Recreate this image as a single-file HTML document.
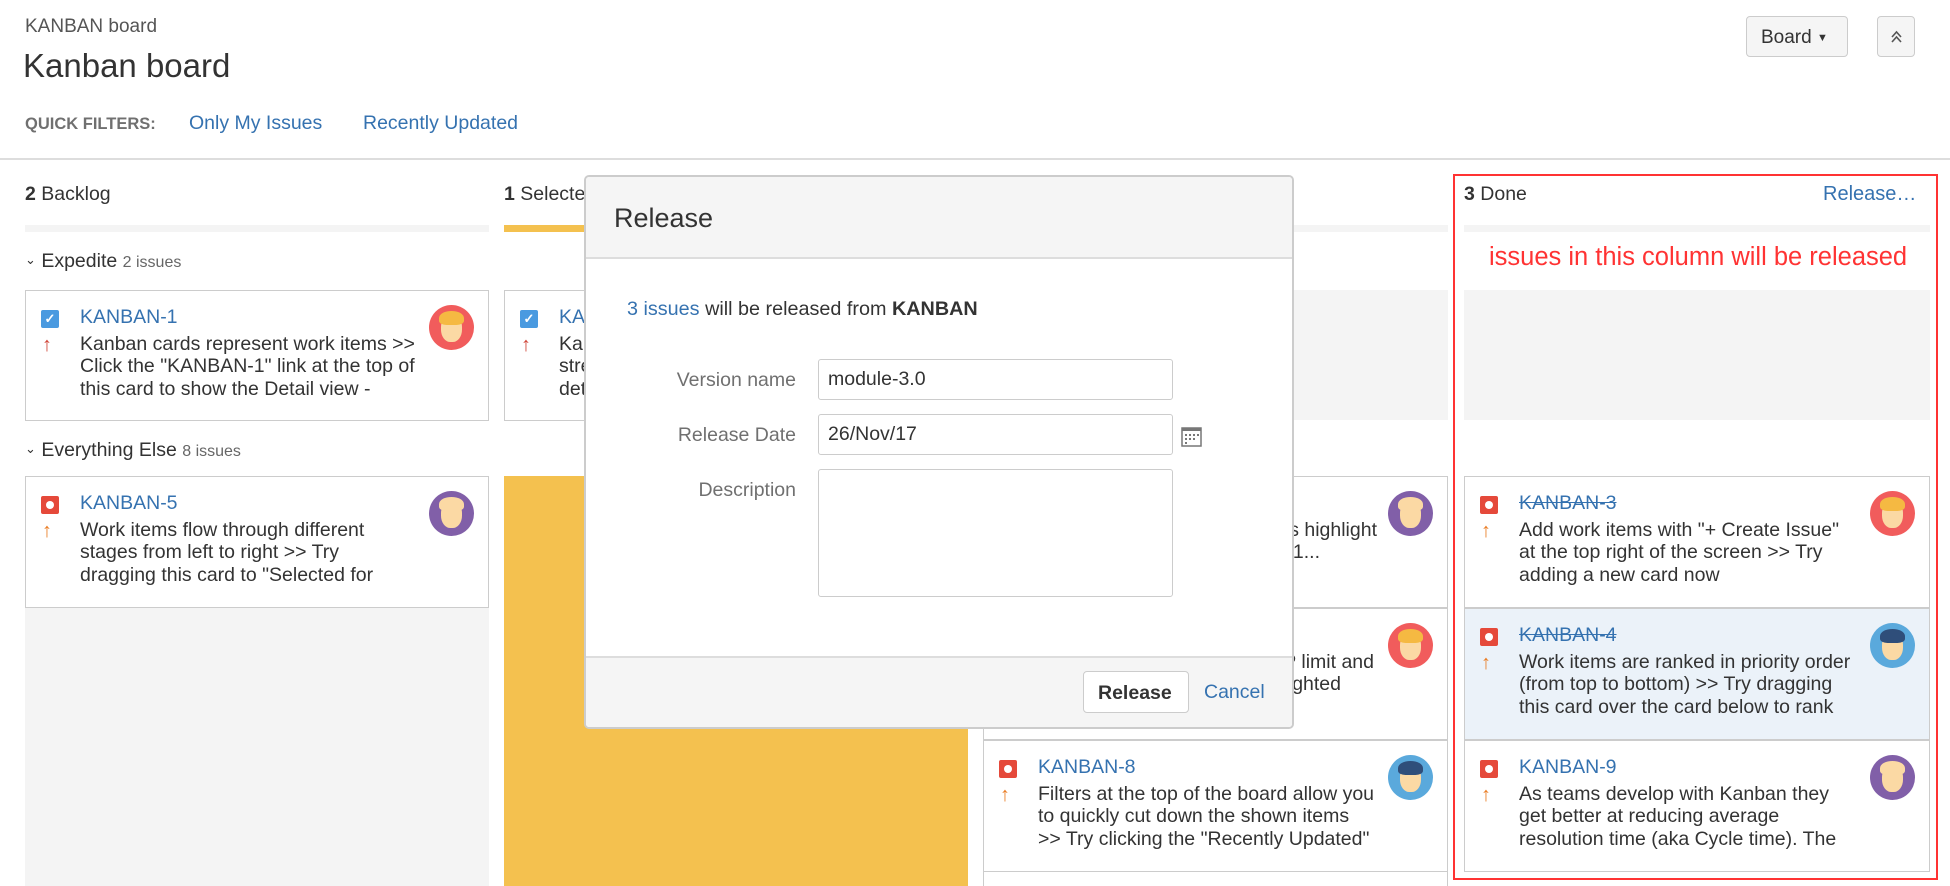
<!DOCTYPE html>
<html><head><meta charset="utf-8"><style>
*{margin:0;padding:0;box-sizing:border-box}
html,body{width:1950px;height:886px;overflow:hidden}
body{background:#fff;font-family:"Liberation Sans",Arial,sans-serif;color:#333;position:relative}
.a{position:absolute}
.link{color:#3572b0}
.btn{position:absolute;border:1px solid #ccc;border-radius:4px;background:#f5f5f5;font-size:19px;color:#333}
.colh{font-size:19.5px;color:#333;top:183px}
.bar{height:7px;background:#f4f4f4;top:225px}
.card{position:absolute;background:#fff;border:1px solid #ccc;height:132px;overflow:hidden}
.key{position:absolute;left:54px;top:15px;font-size:19.5px;color:#3572b0}
.txt{position:absolute;left:54px;top:42px;font-size:19.5px;line-height:22.4px;color:#333;white-space:nowrap}
.rt{position:absolute;font-size:19.5px;line-height:22.4px;color:#333;white-space:nowrap;text-align:right}
.ic{position:absolute;left:15px;top:19px;width:18px;height:18px;border-radius:2px}
.bug{background:#e5493a}.bug::after{content:"";position:absolute;left:5px;top:5px;width:8px;height:8px;border-radius:50%;background:#fff}
.task{background:#4a9ae0;color:#fff;font-size:13px;text-align:center;line-height:18px;font-weight:bold}
.arr{position:absolute;left:16px;top:43px;font-size:20px;font-weight:bold}
.av{position:absolute;right:14px;top:14px;width:45px;height:45px;border-radius:50%;overflow:hidden}
.av::after{content:"";position:absolute;left:12px;top:10px;width:21px;height:27px;border-radius:45%;background:#fbd9a4}
.av::before{content:"";position:absolute;left:10px;top:6px;width:25px;height:14px;border-radius:50% 50% 30% 30%;background:var(--h,#f5b942);z-index:1}
.lbl{position:absolute;font-size:19.5px;color:#707070;text-align:right;width:240px;left:556px}
.inp{position:absolute;left:818px;width:355px;border:1px solid #ccc;border-radius:3px;background:#fff;font-size:19.5px;padding:8px 9px;color:#333}
</style></head><body>
<div class="a" style="left:25px;top:16px;font-size:19px;color:#555">KANBAN board</div>
<div class="a" style="left:23px;top:47px;font-size:33px;color:#333">Kanban board</div>
<div class="a" style="left:25px;top:115px;font-size:16.5px;font-weight:bold;color:#707070">QUICK FILTERS:</div>
<div class="a link" style="left:189px;top:112px;font-size:19.5px">Only My Issues</div>
<div class="a link" style="left:363px;top:112px;font-size:19.5px">Recently Updated</div>
<div class="btn" style="left:1746px;top:16px;width:102px;height:41px;padding:10px 0 0 14px">Board <span style="font-size:11px;vertical-align:2px">▼</span></div>
<div class="btn" style="left:1877px;top:16px;width:38px;height:41px"><svg style="position:absolute;left:12px;top:13px" width="13" height="14" viewBox="0 0 13 14"><path d="M2 7 L6.5 2 L11 7 M2 12 L6.5 7 L11 12" fill="none" stroke="#555" stroke-width="1.6"/></svg></div>
<div class="a" style="left:0;top:158px;width:1950px;height:2px;background:#ddd"></div>

<div class="a colh" style="left:25px"><b>2</b> Backlog</div>
<div class="a colh" style="left:504px"><b>1</b> Selected</div>
<div class="a colh" style="left:1464px"><b>3</b> Done</div>
<div class="a link" style="left:1823px;top:183px;font-size:20px">Release…</div>
<div class="a bar" style="left:25px;width:464px"></div>
<div class="a bar" style="left:504px;width:464px;background:#f4c14f"></div>
<div class="a bar" style="left:983px;width:465px"></div>
<div class="a bar" style="left:1464px;width:466px"></div>

<div class="a" style="left:25px;top:250px;font-size:19.5px"><span style="font-size:13px;vertical-align:3px">⌄</span> Expedite <span style="font-size:16px;color:#666">2 issues</span></div>
<div class="a" style="left:1489px;top:243px;font-size:25.5px;color:#f33">issues in this column will be released</div>
<div class="a" style="left:983px;top:290px;width:465px;height:130px;background:#f4f4f4"></div>
<div class="a" style="left:1464px;top:290px;width:466px;height:130px;background:#f4f4f4"></div>

<div class="card" style="left:25px;top:290px;width:464px;height:131px">
<div class="ic task">✓</div><div class="key">KANBAN-1</div><div class="arr" style="color:#d04437">↑</div>
<div class="txt">Kanban cards represent work items &gt;&gt;<br>Click the "KANBAN-1" link at the top of<br>this card to show the Detail view -</div>
<div class="av" style="background:#f15c5c"></div></div>
<div class="card" style="left:504px;top:290px;width:464px;height:131px">
<div class="ic task">✓</div><div class="key">KANBAN-2</div><div class="arr" style="color:#d04437">↑</div>
<div class="txt">Kanban cards<br>stream<br>details</div></div>

<div class="a" style="left:25px;top:439px;font-size:19.5px"><span style="font-size:13px;vertical-align:3px">⌄</span> Everything Else <span style="font-size:16px;color:#666">8 issues</span></div>
<div class="a" style="left:25px;top:608px;width:464px;height:278px;background:#f4f4f4"></div>
<div class="a" style="left:504px;top:476px;width:464px;height:410px;background:#f4c14f"></div>

<div class="card" style="left:25px;top:476px;width:464px">
<div class="ic bug"></div><div class="key">KANBAN-5</div><div class="arr" style="color:#ea7d24">↑</div>
<div class="txt">Work items flow through different<br>stages from left to right &gt;&gt; Try<br>dragging this card to "Selected for</div>
<div class="av" style="background:#815fa8;--h:#fbd9a4"></div></div>

<div class="card" style="left:983px;top:476px;width:465px"><div class="rt" style="right:70px;top:42px">Swimlanes highlight</div><div class="rt" style="right:127px;top:64px">KANBAN-1...</div><div class="av" style="background:#815fa8;--h:#fbd9a4"></div></div>
<div class="card" style="left:983px;top:608px;width:465px"><div class="rt" style="right:73px;top:42px">WIP limit and</div><div class="rt" style="right:106px;top:64px">highlighted</div><div class="av" style="background:#f15c5c"></div></div>
<div class="card" style="left:983px;top:740px;width:465px">
<div class="ic bug"></div><div class="key">KANBAN-8</div><div class="arr" style="color:#ea7d24">↑</div>
<div class="txt">Filters at the top of the board allow you<br>to quickly cut down the shown items<br>&gt;&gt; Try clicking the "Recently Updated"</div>
<div class="av" style="background:#5aa9dc;--h:#2f4e7a"></div></div>
<div class="card" style="left:983px;top:871px;width:465px;height:15px;border-bottom:none"></div>

<div class="card" style="left:1464px;top:476px;width:466px">
<div class="ic bug"></div><div class="key" style="text-decoration:line-through">KANBAN-3</div><div class="arr" style="color:#ea7d24">↑</div>
<div class="txt">Add work items with "+ Create Issue"<br>at the top right of the screen &gt;&gt; Try<br>adding a new card now</div>
<div class="av" style="background:#f15c5c"></div></div>
<div class="card" style="left:1464px;top:608px;width:466px;background:#ebf2f9">
<div class="ic bug"></div><div class="key" style="text-decoration:line-through">KANBAN-4</div><div class="arr" style="color:#ea7d24">↑</div>
<div class="txt">Work items are ranked in priority order<br>(from top to bottom) &gt;&gt; Try dragging<br>this card over the card below to rank</div>
<div class="av" style="background:#5aa9dc;--h:#2f4e7a"></div></div>
<div class="card" style="left:1464px;top:740px;width:466px">
<div class="ic bug"></div><div class="key">KANBAN-9</div><div class="arr" style="color:#ea7d24">↑</div>
<div class="txt">As teams develop with Kanban they<br>get better at reducing average<br>resolution time (aka Cycle time). The</div>
<div class="av" style="background:#815fa8;--h:#fbd9a4"></div></div>

<div class="a" style="left:1453px;top:174px;width:485px;height:706px;border:2px solid #f33"></div>

<div class="a" style="left:584px;top:175px;width:710px;height:554px;background:#fff;border:2px solid #ccc;border-radius:5px;overflow:hidden">
<div style="height:82px;background:#f5f5f5;border-bottom:2px solid #ddd;padding:26px 28px;font-size:27px;color:#333">Release</div>
<div class="a" style="left:41px;top:121px;font-size:19.8px"><span class="link">3 issues</span> will be released from <b>KANBAN</b></div>
<div style="position:absolute;left:0;bottom:0;width:100%;height:71px;background:#f5f5f5;border-top:2px solid #ddd"></div>
<div class="btn" style="left:497px;top:494px;width:106px;height:42px;background:#fff;font-weight:bold;font-size:19.5px;padding:10px 0 0 14px">Release</div>
<div class="a link" style="left:618px;top:504px;font-size:19.5px">Cancel</div>
</div>
<div class="lbl" style="top:369px">Version name</div>
<div class="lbl" style="top:424px">Release Date</div>
<div class="lbl" style="top:479px">Description</div>
<div class="inp" style="top:359px;height:41px">module-3.0</div>
<div class="inp" style="top:414px;height:41px">26/Nov/17</div>
<div class="inp" style="top:469px;height:128px"></div>
<svg class="a" style="left:1180px;top:424px" width="24" height="24" viewBox="0 0 24 24"><rect x="2" y="4" width="19" height="18" fill="none" stroke="#777" stroke-width="1.5"/><rect x="2" y="4" width="19" height="3" fill="#777"/><g fill="#777"><rect x="5" y="10" width="2" height="2"/><rect x="9" y="10" width="2" height="2"/><rect x="13" y="10" width="2" height="2"/><rect x="17" y="10" width="2" height="2"/><rect x="5" y="14" width="2" height="2"/><rect x="9" y="14" width="2" height="2"/><rect x="13" y="14" width="2" height="2"/><rect x="5" y="18" width="2" height="2"/></g></svg>
</body></html>
